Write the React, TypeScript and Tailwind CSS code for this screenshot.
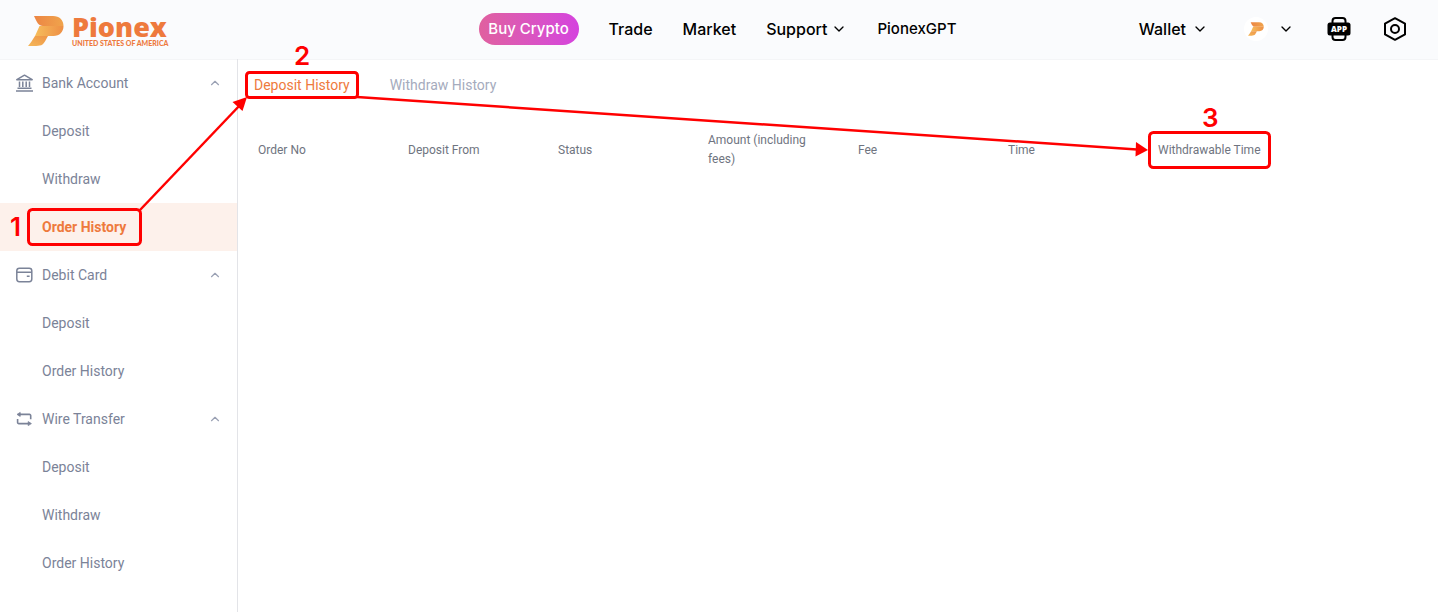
import { useState } from "react";
import type { ReactNode } from "react";
import { ChevronDown, ChevronUp } from "lucide-react";

type MenuGroup = {
  title: string;
  icon: ReactNode;
  items: string[];
};

const menuGroups: MenuGroup[] = [
  {
    title: "Bank Account",
    icon: <BankIcon />,
    items: ["Deposit", "Withdraw", "Order History"],
  },
  {
    title: "Debit Card",
    icon: <CardIcon />,
    items: ["Deposit", "Order History"],
  },
  {
    title: "Wire Transfer",
    icon: <TransferIcon />,
    items: ["Deposit", "Withdraw", "Order History"],
  },
];

const tabs = ["Deposit History", "Withdraw History"];

const columns = [
  "Order No",
  "Deposit From",
  "Status",
  "Amount (including fees)",
  "Fee",
  "Time",
  "Withdrawable Time",
];

function BankIcon() {
  return (
    <svg
      className="h-[18px] w-[18px]"
      fill="none"
      stroke="currentColor"
      strokeWidth="1.5"
      viewBox="0 0 18 18"
    >
      <path d="M.8 5.7 8.5 1.2l7.7 4.5z" strokeLinejoin="round" />
      <path d="M3.5 7.5v5.500M6.800 7.500v5.500M10.200 7.500v5.500M13.500 7.500v5.500" />
      <path d="M1.5 14.2h14M0 16.900h17" />
    </svg>
  );
}

function CardIcon() {
  return (
    <svg
      className="h-[18px] w-[18px]"
      fill="none"
      stroke="currentColor"
      strokeWidth="1.5"
      viewBox="0 0 18 18"
    >
      <rect height="13.5" rx="2.6" width="15" x=".8" y="2.2" />
      <path d="M.8 6.3h15M10.800 10.200h2.800" />
    </svg>
  );
}

function TransferIcon() {
  return (
    <svg
      className="h-[18px] w-[18px]"
      fill="none"
      stroke="currentColor"
      strokeWidth="1.6"
      viewBox="0 0 18 18"
    >
      <path d="M3 4.400h10.500a1.200 1.200 0 0 1 1.200 1.200v3.600M13 13.600H2.800a1.200 1.200 0 0 1-1.200-1.200V9" />
      <path
        d="M4.200 2.400v4L1 4.400zM12.200 11.600v4l3.200-2z"
        fill="currentColor"
        strokeLinejoin="round"
        strokeWidth=".8"
      />
    </svg>
  );
}

function LogoMark({ className }: { className: string }) {
  return (
    <svg className={className} viewBox="0 0 36 30">
      <defs>
        <linearGradient id="mark-top" x1="0" x2="1">
          <stop offset="0" stopColor="#ec8544" />
          <stop offset="1" stopColor="#f0a44c" />
        </linearGradient>
        <linearGradient id="mark-mid" x1="0" x2="1">
          <stop offset="0" stopColor="#f6bd5c" />
          <stop offset="1" stopColor="#ee8f45" />
        </linearGradient>
        <linearGradient id="mark-leg" x1="1" x2="0" y1="0" y2="1">
          <stop offset="0" stopColor="#ee9447" />
          <stop offset="1" stopColor="#f5b85a" />
        </linearGradient>
      </defs>
      <path
        d="M6 0h19c6.500 0 10.500 4 10.500 10H15C10.500 10 9 6.500 6 0z"
        fill="url(#mark-top)"
      />
      <path
        d="M11.500 10h24c0 6-4 10-10 10H7c1.500-3 3-7 4.500-10z"
        fill="url(#mark-mid)"
      />
      <path
        d="M7 20h13c-2 3.500-3.500 7-5.500 8.500-3 2-9 1.500-14.500 1.500 2.500-3 4.500-6 7-10z"
        fill="url(#mark-leg)"
      />
    </svg>
  );
}

function AppIcon() {
  return (
    <svg className="h-6 w-6" viewBox="0 0 24 24">
      <rect
        fill="none"
        height="22"
        rx="3"
        stroke="#000"
        strokeWidth="2"
        width="13"
        x="5.5"
        y="1"
      />
      <rect height="13" rx="2.5" width="23" x=".5" y="5.5" />
      <text
        className="font-['Open_Sans',sans-serif] text-[8px] font-extrabold"
        fill="#fff"
        textAnchor="middle"
        x="12"
        y="15"
      >
        APP
      </text>
    </svg>
  );
}

function SettingsIcon() {
  return (
    <svg
      className="h-6 w-6"
      fill="none"
      stroke="#000"
      strokeLinejoin="round"
      strokeWidth="2"
      viewBox="0 0 24 24"
    >
      <path d="M12 1.2 22 6.6v10.8l-10 5.400-10-5.400V6.600z" />
      <circle cx="12" cy="12" r="4" />
    </svg>
  );
}

function Header() {
  return (
    <header className="flex h-[60px] items-center border-b border-[#f4f5f7] bg-[#fafbfd] pr-[31px] pb-0.5 pl-7 font-['Inter','Liberation_Sans',sans-serif] text-base leading-6 font-medium text-black">
      <div className="flex flex-1">
        <a
          aria-label="Pionex home"
          className="flex items-center gap-2 pt-1 text-[#ee7a3d]"
          href="#home"
        >
          <LogoMark className="h-[30px] w-9" />
          <span className="flex flex-col">
            <span className="font-['Open_Sans',sans-serif] text-[27px] leading-6 font-extrabold">
              Pionex
            </span>
            <span className="font-['Lato',sans-serif] text-[7px] leading-2 font-black whitespace-nowrap">
              UNITED STATES OF AMERICA
            </span>
          </span>
        </a>
      </div>

      <nav className="flex items-center gap-[30px]">
        <a
          className="grid h-8 w-[100px] place-items-center rounded-full bg-linear-to-r from-[#e0609f] to-[#d543de] text-[15px] whitespace-nowrap text-white"
          href="#buy"
        >
          Buy Crypto
        </a>
        <a href="#trade">Trade</a>
        <a href="#market">Market</a>
        <button className="flex items-center gap-1" type="button">
          Support
          <ChevronDown className="h-4 w-4" />
        </button>
        <a className="text-[15px] leading-6" href="#gpt">
          PionexGPT
        </a>
      </nav>

      <div className="flex flex-1 items-center justify-end">
        <button className="flex items-center gap-1.5" type="button">
          Wallet
          <ChevronDown className="h-4 w-4" />
        </button>
        <button aria-label="Account" className="ml-9 flex items-center gap-2.5" type="button">
          <span className="grid h-6 w-6 place-items-center rounded-full bg-white">
            <LogoMark className="h-3.5 w-4" />
          </span>
          <ChevronDown className="h-4 w-4" />
        </button>
        <button aria-label="Download app" className="ml-[33px]" type="button">
          <AppIcon />
        </button>
        <button aria-label="Settings" className="ml-8" type="button">
          <SettingsIcon />
        </button>
      </div>
    </header>
  );
}

function Sidebar() {
  return (
    <aside className="w-[238px] shrink-0 border-r border-[#e3e4e8] text-sm text-[#7b8398]">
      {menuGroups.map((group) => (
        <section key={group.title}>
          <button
            className="flex h-12 w-full items-center gap-2 pr-[15px] pl-4"
            type="button"
          >
            {group.icon}
            <span className="flex-1 text-left">{group.title}</span>
            <ChevronUp className="h-3.5 w-3.5 text-[#9aa1b4]" />
          </button>
          {group.items.map((item) => {
            const active = group.title === "Bank Account" && item === "Order History";

            return (
              <a
                className={
                  active
                    ? "flex h-12 items-center bg-[#fdf1eb] pl-[42px] font-bold text-[#ee7a3d]"
                    : "flex h-12 items-center pl-[42px]"
                }
                href="#section"
                key={item}
              >
                {item}
              </a>
            );
          })}
        </section>
      ))}
    </aside>
  );
}

function History() {
  const [activeTab, setActiveTab] = useState(tabs[0]);

  return (
    <main className="min-w-0 flex-1">
      <div className="flex h-[52px] items-center gap-10 pl-4 text-sm">
        {tabs.map((tab) => (
          <button
            className={activeTab === tab ? "text-[#ee7a3d]" : "text-[#a5abbd]"}
            key={tab}
            onClick={() => setActiveTab(tab)}
            type="button"
          >
            {tab}
          </button>
        ))}
      </div>
      <table className="ml-2.5 w-[1050px] table-fixed text-left text-xs leading-[19px] text-[#6f7480]">
        <thead>
          <tr className="h-[78px]">
            {columns.map((column) => (
              <th className="pr-6 pl-2.5 font-normal last:pr-0" key={column}>
                {column}
              </th>
            ))}
          </tr>
        </thead>
      </table>
    </main>
  );
}

// Numbered walkthrough drawn over the page
function Walkthrough() {
  return (
    <div className="pointer-events-none absolute inset-0 font-['Inter',sans-serif] text-[26px] leading-7 font-semibold text-[#ff0000]">
      <svg className="absolute top-0 left-0" height="612" width="1438">
        <g fill="none" stroke="#ff0000" strokeWidth="3">
          <rect height="35" rx="4" width="112" x="28.5" y="209.5" />
          <rect height="25" rx="3" width="111" x="246.5" y="72.5" />
          <rect height="35" rx="4" width="120" x="1149.5" y="132.5" />
        </g>
        <g stroke="#ff0000" strokeWidth="2.5">
          <path d="M140 210 241 104" />
          <path d="M357 97 1137 149.5" />
        </g>
        <path d="M247 97 242.5 111 232.5 102z" fill="#ff0000" />
        <path d="M1148 150 1135.5 156.5 1136 142z" fill="#ff0000" />
      </svg>
      <span className="absolute top-[213px] left-[10px]">1</span>
      <span className="absolute top-[42px] left-[294px]">2</span>
      <span className="absolute top-[104px] left-[1202px]">3</span>
    </div>
  );
}

export default function App() {
  return (
    <div className="relative flex min-h-screen flex-col bg-white font-['Roboto','Liberation_Sans',sans-serif]">
      <Header />
      <div className="-mt-px flex flex-1">
        <Sidebar />
        <History />
      </div>
      <Walkthrough />
    </div>
  );
}
